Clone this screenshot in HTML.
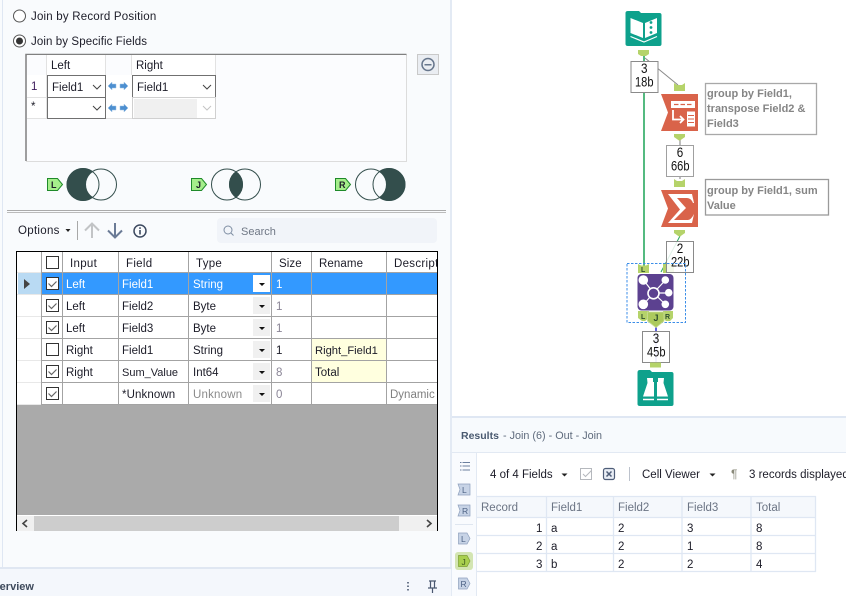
<!DOCTYPE html>
<html><head><meta charset="utf-8"><style>
html,body{margin:0;padding:0;background:#fff;width:846px;height:596px;overflow:hidden}
svg{display:block}
text{font-family:"Liberation Sans",sans-serif;font-size:11.5px;fill:#1c1c28}
.g{fill:#8a8596}.w{fill:#fff}.c{font-size:14px;fill:#111}
.a{font-weight:bold;fill:#858585;font-size:11px}
.h{fill:#6b7484}
.gl{stroke:#a3a3a3;stroke-width:1;fill:none}
.anc{fill:#b5d36a}
</style></head><body>
<svg width="846" height="596" viewBox="0 0 846 596" xmlns="http://www.w3.org/2000/svg">
<defs>
<clipPath id="gc"><rect x="17" y="252" width="420" height="160"/></clipPath>
<clipPath id="a2"><circle cx="245" cy="184.5" r="16"/></clipPath>
<clipPath id="ov"><rect x="0" y="569" width="450" height="27"/></clipPath>
</defs>
<rect width="846" height="596" fill="#fff"/>
<!-- left panel -->
<rect x="0" y="0" width="451" height="568" fill="#f9fbfd"/>
<rect x="2" y="0" width="1" height="568" fill="#dfe7f3"/>
<rect x="450" y="0" width="2" height="596" fill="#e3eaf4"/>
<circle cx="19.5" cy="16" r="6" fill="#fff" stroke="#555"/>
<text x="31" y="20" style="letter-spacing:.2px">Join by Record Position</text>
<circle cx="19.5" cy="41" r="6" fill="#fff" stroke="#555"/>
<circle cx="19.5" cy="41" r="3.5" fill="#333"/>
<text x="31" y="45" style="letter-spacing:.1px">Join by Specific Fields</text>
<!-- join box -->
<path d="M406.5 54.5V161.5H26" fill="none" stroke="#dcdcdc"/>
<path d="M26 161V54.5H406.500" fill="none" stroke="#808080" stroke-width="1.5"/>
<rect x="27" y="55" width="379" height="106" fill="#fbfcfe"/>
<rect x="47" y="55" width="59" height="20" fill="#fff"/>
<rect x="132" y="55" width="84" height="20" fill="#fff"/>
<rect x="27" y="75" width="189" height="44" fill="#fff"/>
<path d="M46.500 55V119M105.500 55V75M131.500 55V75M215.500 55V119M27 118.500H216M27 97.500H47" stroke="#e2e2e2" fill="none"/>
<text x="51" y="69">Left</text><text x="136" y="69">Right</text>
<text x="31" y="90" style="fill:#3c1a5a">1</text><text x="31" y="110">*</text>
<rect x="47.500" y="75.500" width="58" height="22" fill="#fff" stroke="#707070"/>
<rect x="47.500" y="97.500" width="58" height="21" fill="#fff" stroke="#707070"/>
<rect x="132.500" y="75.500" width="83" height="22" fill="#fff" stroke="#707070"/>
<rect x="132.500" y="97.500" width="83" height="21" fill="#fff" stroke="#d0d0d0"/>
<rect x="134" y="99" width="63" height="19" fill="#f0f0f0"/>
<text x="52" y="91">Field1</text><text x="137" y="91">Field1</text>
<path d="M93 85l4 4 4-4M93 106l4 4 4-4M203 85l4 4 4-4" fill="none" stroke="#444"/>
<path d="M203 106l4 4 4-4" fill="none" stroke="#c4c4c4"/>
<g fill="#4d8fd0" stroke="#9cc0e4" stroke-width=".5">
<path d="M108 86l4-4v2h4v4h-4v2zM128 86l-4-4v2h-4v4h4v2z"/>
<path d="M108 108l4-4v2h4v4h-4v2zM128 108l-4-4v2h-4v4h4v2z"/>
</g>
<rect x="417.500" y="54.500" width="21" height="20" fill="#eaedf2" stroke="#c9c9c9"/>
<circle cx="428" cy="64.500" r="6" fill="none" stroke="#67768c" stroke-width="1.500"/>
<rect x="424.500" y="64" width="7" height="1.500" fill="#67768c"/>
<!-- venn -->
<path d="M47.500 178.500H57.500L62.500 184.500L57.500 190.500H47.500Z" fill="#a5ee8b" stroke="#1f8a2a"/>
<text x="51" y="188" style="font-size:9px;font-weight:bold">L</text>
<path d="M191.500 178.500H201.500L206.500 184.500L201.500 190.500H191.500Z" fill="#a5ee8b" stroke="#1f8a2a"/>
<text x="196" y="188" style="font-size:9px;font-weight:bold">J</text>
<path d="M335.500 178.500H345.500L350.500 184.500L345.500 190.500H335.500Z" fill="#a5ee8b" stroke="#1f8a2a"/>
<text x="339" y="188" style="font-size:9px;font-weight:bold">R</text>
<circle cx="83" cy="184.500" r="16.500" fill="#334e4c"/>
<circle cx="101" cy="184.500" r="15.500" fill="#f9fbfd" stroke="#334e4c"/>
<circle cx="83" cy="184.500" r="16" fill="none" stroke="#334e4c"/>
<circle cx="227" cy="184.500" r="15.500" fill="none" stroke="#334e4c"/>
<circle cx="245" cy="184.500" r="15.500" fill="none" stroke="#334e4c"/>
<circle cx="227" cy="184.500" r="16" fill="#334e4c" clip-path="url(#a2)"/>
<circle cx="389" cy="184.500" r="16.500" fill="#334e4c"/>
<circle cx="371" cy="184.500" r="15.500" fill="#f9fbfd" stroke="#334e4c"/>
<circle cx="389" cy="184.500" r="16" fill="none" stroke="#334e4c"/>
<!-- divider -->
<rect x="7" y="210" width="439" height="1" fill="#aaa"/>
<rect x="7" y="212" width="439" height="1" fill="#bbb"/>
<!-- toolbar -->
<text x="18" y="234" style="letter-spacing:.3px">Options</text>
<path d="M65.500 229h5l-2.500 3z" fill="#222"/>
<rect x="77" y="221" width="1" height="19" fill="#a8a8a8"/>
<path d="M92 224v14M85 230.500l7-7 7 7" fill="none" stroke="#c2c4c6" stroke-width="2"/>
<path d="M115 223v14M108 230.500l7 7 7-7" fill="none" stroke="#6b7b96" stroke-width="2"/>
<circle cx="140" cy="231" r="6" fill="none" stroke="#3d4a60" stroke-width="1.500"/>
<rect x="139.200" y="230" width="1.600" height="4.500" fill="#3d4a60"/><rect x="139.200" y="227.300" width="1.600" height="1.600" fill="#3d4a60"/>
<rect x="217" y="218" width="220" height="25" rx="4" fill="#f1f4f9"/>
<circle cx="228" cy="230" r="4" fill="none" stroke="#7f8ea3"/><path d="M231 233l2.500 2.500" stroke="#7f8ea3"/>
<text x="241" y="235" style="fill:#6f7785;font-size:11px">Search</text>
<!-- grid -->
<rect x="17" y="252" width="420" height="153" fill="#fff"/>
<rect x="42" y="273" width="395" height="21" fill="#3399ff"/>
<rect x="18" y="273" width="23" height="21" fill="#b9daf3"/>
<path d="M24 279l6 5-6 5z" fill="#444"/>
<rect x="312" y="339" width="74" height="43" fill="#ffffdf"/>
<rect x="17" y="405" width="420" height="110" fill="#aaa"/>
<g class="gl">
<path d="M41.500 252V405M62.500 252V405M118.500 252V405M188.500 252V405M271.500 252V405M311.500 252V405M386.500 252V405"/>
<path d="M17 272.500H437M17 294.500H437M17 316.500H437M17 338.500H437M17 360.500H437M17 382.500H437M17 404.500H437"/>
</g>
<path d="M17 272.500H41M17 294.500H41M17 316.500H41M17 338.500H41M17 360.500H41M17 382.500H41M17 404.500H41" stroke="#e8e8e8"/>
<path d="M16.500 531V251.500H437.500V531" fill="none" stroke="#000"/>
<g fill="none" stroke="#555">
<rect x="46.500" y="256.500" width="12" height="12" stroke="#333"/>
<rect x="46.500" y="277.500" width="12" height="12" fill="#fff" stroke="#333"/>
<rect x="46.500" y="299.500" width="12" height="12" stroke="#333"/>
<rect x="46.500" y="321.500" width="12" height="12" stroke="#333"/>
<rect x="46.500" y="343.500" width="12" height="12" stroke="#333"/>
<rect x="46.500" y="365.500" width="12" height="12" stroke="#333"/>
<rect x="46.500" y="387.500" width="12" height="12" stroke="#333"/>
<path d="M48.500 283.500l3 3 5-5M48.500 305.500l3 3 5-5M48.500 327.500l3 3 5-5M48.500 371.500l3 3 5-5M48.500 393.500l3 3 5-5" stroke="#666" stroke-width="1.200"/>
</g>
<text x="70" y="267" style="letter-spacing:.3px">Input</text><text x="126" y="267" style="letter-spacing:.3px">Field</text><text x="196" y="267" style="letter-spacing:.3px">Type</text><text x="279" y="267" style="letter-spacing:.1px">Size</text><text x="319" y="267" style="letter-spacing:.1px">Rename</text>
<text x="394" y="267" clip-path="url(#gc)" style="letter-spacing:.3px">Description</text>
<text x="66" y="288" class="w">Left</text><text x="122" y="288" class="w">Field1</text><text x="193" y="288" class="w">String</text><text x="276" y="288" class="w">1</text>
<text x="66" y="310">Left</text><text x="122" y="310">Field2</text><text x="193" y="310">Byte</text><text x="276" y="310" class="g">1</text>
<text x="66" y="332">Left</text><text x="122" y="332">Field3</text><text x="193" y="332">Byte</text><text x="276" y="332" class="g">1</text>
<text x="66" y="354">Right</text><text x="122" y="354">Field1</text><text x="193" y="354">String</text><text x="276" y="354">1</text><text x="315" y="354" style="font-size:11.2px">Right_Field1</text>
<text x="66" y="376">Right</text><text x="122" y="376" style="font-size:11px">Sum_Value</text><text x="193" y="376">Int64</text><text x="276" y="376" class="g">8</text><text x="315" y="376">Total</text>
<text x="122" y="398" style="letter-spacing:.1px">*Unknown</text><text x="193" y="398" style="fill:#8a8a8a;letter-spacing:.2px">Unknown</text><text x="276" y="398" class="g">0</text><text x="390" y="398" style="fill:#808080">Dynamic</text>
<rect x="253" y="275" width="17" height="17" fill="#fff"/><rect x="253" y="297" width="17" height="17" fill="#f0f0f0"/><rect x="253" y="319" width="17" height="17" fill="#f0f0f0"/><rect x="253" y="341" width="17" height="17" fill="#f0f0f0"/><rect x="253" y="363" width="17" height="17" fill="#f0f0f0"/><rect x="253" y="385" width="17" height="17" fill="#f0f0f0"/>
<path d="M259 283h6l-3 3zM259 305h6l-3 3zM259 327h6l-3 3zM259 349h6l-3 3zM259 371h6l-3 3zM259 393h6l-3 3z" fill="#111"/>
<!-- scrollbar -->
<rect x="17" y="515" width="420" height="1" fill="#fff"/>
<rect x="17" y="516" width="420" height="15" fill="#f0f0f0"/>
<rect x="34" y="516" width="365" height="15" fill="#cdcdcd"/>
<path d="M27 520l-4 3.500 4 3.500M427 520l4 3.500-4 3.500" fill="none" stroke="#444" stroke-width="1.600"/>
<!-- overview -->
<rect x="0" y="567" width="452" height="2" fill="#e0e7f2"/>
<rect x="0" y="569" width="451" height="27" fill="#f4f7fc"/>
<text x="-15" y="590" clip-path="url(#ov)" style="font-weight:bold;fill:#3e4a5c;font-size:11px">Overview</text>
<path d="M408 582v1.500M408 585.500v1.500M408 589v1.500" stroke="#4a5870" stroke-width="1.600"/>
<path d="M429 581h7M430.500 581v7M434.500 581v7M428 588h9M432.500 588v5" stroke="#4a5870" fill="none" stroke-width="1.200"/>
<!-- canvas connectors -->
<path d="M644 56V272" stroke="#2aa860" stroke-width="1.600"/>
<path d="M645 58L678 85" stroke="#8a8a8a"/>
<path d="M680 140V179" stroke="#a8a8a8" stroke-width="1.500"/>
<path d="M680 236L661 272" stroke="#2aa860"/>
<path d="M656 327V367" stroke="#3b3bdc" stroke-width="1.600"/>
<!-- input tool -->
<path d="M628 11H639L641 13H659.500Q661.500 13 661.500 15V44Q661.500 46 659.500 46H628Q625.500 46 625.500 44V13Q625.500 11 628 11Z" fill="#0ea18c"/>
<path d="M630.500 18L643 23V38L630.500 33ZM645 23L657 18V33L645 38Z" fill="#fff"/>
<path d="M630.500 36.500L644 42L657 36.500" fill="none" stroke="#fff" stroke-width="1.200"/>
<circle cx="651" cy="22.500" r="1.400" fill="#0ea18c"/><circle cx="651" cy="27.500" r="1.400" fill="#0ea18c"/><circle cx="651" cy="32.500" r="1.400" fill="#0ea18c"/>
<path class="anc" d="M638 50H649V54L646 56H641L638 54Z"/>
<!-- box 1 -->
<rect x="631" y="61.500" width="27" height="31" fill="#fff" stroke="#8a8a8a"/>
<text class="c" x="641" y="73" textLength="6.500" lengthAdjust="spacingAndGlyphs">3</text><text class="c" x="635" y="86.500" textLength="18.500" lengthAdjust="spacingAndGlyphs">18b</text>
<!-- transpose -->
<path class="anc" d="M674 83L677 85H682L685 83V91H674Z"/>
<path d="M661 94H698V131H661L668 112.500Z" fill="#d9634a"/>
<rect x="671" y="101" width="24" height="7" fill="#fff"/>
<path d="M674 104.500h4.500M680.500 104.500h4.500M687 104.500h4.500" stroke="#d9634a" stroke-width="1.300"/>
<path d="M673 110V119.500H683M680 116l3.500 3.500-3.500 3.500" fill="none" stroke="#fff" stroke-width="1.800"/>
<rect x="687" y="111.500" width="8" height="15" fill="#fff"/>
<path d="M688 115.500h6M688 119h6M688 122.500h6" stroke="#d9634a"/>
<path class="anc" d="M674 134H685V137L680 140.500H679L674 137Z"/>
<!-- annot 1 -->
<rect x="705.500" y="83.500" width="111" height="51" fill="#fff" stroke="#a8a8a8" stroke-width="1.300"/>
<text class="a" x="707" y="97">group by Field1,</text><text class="a" x="707" y="112">transpose Field2 &amp;</text><text class="a" x="707" y="127">Field3</text>
<!-- box 2 -->
<rect x="666.500" y="145.500" width="27" height="31" fill="#fff" stroke="#a0a0a0"/>
<text class="c" x="676.800" y="157" textLength="6.500" lengthAdjust="spacingAndGlyphs">6</text><text class="c" x="671" y="170.500" textLength="18.500" lengthAdjust="spacingAndGlyphs">66b</text>
<path class="anc" d="M674 179L677 181H682L685 179V187H674Z"/>
<!-- sum -->
<path d="M661 190H698V227H661L668 208.500Z" fill="#d9634a"/>
<path d="M668 194H692L694 203H693Q691 198 687 198H677L686 208L674 220H688Q691 220 694 214L692 223H668L680 209.500Z" fill="#fff"/>
<path class="anc" d="M674 230H685V233L680 236.500H679L674 233Z"/>
<!-- annot 2 -->
<rect x="705.500" y="179.500" width="123" height="35.500" fill="#fff" stroke="#9a9a9a" stroke-width="1.300"/>
<text class="a" x="707" y="194">group by Field1, sum</text><text class="a" x="707" y="209">Value</text>
<!-- box 3 -->
<path class="anc" d="M663 264H674V273H663Z"/>
<rect x="666.500" y="241.500" width="27" height="31" fill="#fff" fill-opacity=".85" stroke="#8a8a8a"/>
<text class="c" x="676.800" y="253" textLength="6.500" lengthAdjust="spacingAndGlyphs">2</text><text class="c" x="671" y="266.500" textLength="18.500" lengthAdjust="spacingAndGlyphs">22b</text>
<!-- join -->
<path class="anc" d="M638 264L641 265.500H646L649 264V273H638Z"/>
<text x="641" y="272" style="font-size:7px;font-weight:bold;fill:#2f4f2f">L</text>
<rect x="627" y="263.500" width="58.500" height="59" fill="none" stroke="#3b8ee8" stroke-dasharray="2.500 1.500"/>
<rect x="637.500" y="274" width="36" height="36.500" rx="4" fill="#5c4190"/>
<g stroke="#fff" stroke-width="1.200"><path d="M653.500 293L643.500 280M653.500 293L665.500 280M653.500 293H668.500M653.500 293L665.500 304.500M653.500 293L643.500 304.500"/></g>
<circle cx="653.500" cy="293.300" r="5.500" fill="#5c4190" stroke="#fff" stroke-width="1.600"/>
<circle cx="643.300" cy="280" r="4.800" fill="#fff"/><circle cx="665.300" cy="280" r="3.800" fill="#fff"/><circle cx="668.700" cy="292.700" r="3.800" fill="#fff"/><circle cx="665.300" cy="304.300" r="3.800" fill="#fff"/><circle cx="643.300" cy="304.300" r="4.800" fill="#fff"/>
<path class="anc" d="M638 311H649V318L645 321H642L638 318ZM663 311H673V318L670 321H666L663 318Z"/>
<path d="M647.500 312H664V321L656 327.500L647.500 321Z" fill="#acca5e" stroke="#c9dd96" stroke-width=".8"/>
<text x="641" y="319" style="font-size:7px;font-weight:bold;fill:#2f4f2f">L</text>
<text x="665" y="319" style="font-size:7px;font-weight:bold;fill:#2f4f2f">R</text>
<text x="653.500" y="321" style="font-size:9px;font-weight:bold;fill:#2f4f2f">J</text>
<!-- box 4 -->
<rect x="642.500" y="331.500" width="27" height="31" fill="#fff" fill-opacity=".9" stroke="#8a8a8a"/>
<text class="c" x="652.800" y="343" textLength="6.500" lengthAdjust="spacingAndGlyphs">3</text><text class="c" x="647" y="356.500" textLength="18.500" lengthAdjust="spacingAndGlyphs">45b</text>
<rect x="650" y="362.500" width="11" height="5" class="anc"/>
<!-- browse -->
<path d="M640 370H650L652 372H671.500Q673.500 372 673.500 374V404Q673.500 406 671.500 406H640Q637.500 406 637.500 404V372.500Q637.500 370 640 370Z" fill="#0ea18c"/>
<path d="M647 378H653V382H654V396.500H643L647.500 383Z" fill="#fff"/>
<path d="M664 378H658V382H657V396.500H668L663.500 383Z" fill="#fff"/>
<path d="M643 399.500H654M657 399.500H668" stroke="#fff" stroke-width="1.500"/>
<!-- results -->
<rect x="452" y="416" width="394" height="2" fill="#dfe7f3"/>
<rect x="452" y="418" width="394" height="34" fill="#f7fafd"/>
<rect x="452" y="452" width="394" height="1" fill="#e2e9f3"/>
<text x="461" y="439" style="font-weight:bold;font-size:10.500px;fill:#4a5a70">Results</text>
<text x="503" y="439" style="fill:#5f6b7d;font-size:10.800px">- Join (6) - Out - Join</text>
<rect x="452" y="453" width="24" height="143" fill="#f9fbfe"/>
<rect x="476" y="453" width="1" height="143" fill="#e2e9f3"/>
<path d="M460 466h10M460 470h10M460 462.500h10" stroke="#6b7f9e" stroke-dasharray="1.500 1 8" fill="none" />
<path d="M458 484H470V495H458L460 489.500Z" fill="#c7d3e6" stroke="#8ea0bd" stroke-width=".7"/><text x="462" y="493" style="font-size:8.500px;fill:#4d6285">L</text>
<path d="M458 505H470V516H458L460 510.500Z" fill="#c7d3e6" stroke="#8ea0bd" stroke-width=".7"/><text x="462" y="514" style="font-size:8.500px;fill:#4d6285">R</text>
<rect x="455" y="524" width="18" height="1" fill="#dfe6f0"/>
<path d="M458.500 533H467L470 538.500L467 544H458.500Z" fill="#c7d3e6" stroke="#8ea0bd" stroke-width=".7"/><text x="461" y="542" style="font-size:8.500px;fill:#4d6285">L</text>
<rect x="455" y="552" width="18" height="18" rx="3" fill="#d3e5b2"/>
<path d="M458.500 555.500H467L470 561L467 566.500H458.500Z" fill="#a8cf4e" stroke="#7d9e33" stroke-width=".7"/><text x="461.500" y="565" style="font-size:8.500px;fill:#3f5a1f">J</text>
<path d="M458.500 578H467L470 583.500L467 589H458.500Z" fill="#c7d3e6" stroke="#8ea0bd" stroke-width=".7"/><text x="460.500" y="587" style="font-size:8.500px;fill:#4d6285">R</text>
<text x="490" y="478">4 of 4 Fields</text>
<path d="M561.500 473.500h6l-3 3z" fill="#222"/>
<rect x="580.500" y="468.500" width="11" height="11" fill="none" stroke="#b5b8bd"/><path d="M583 474l2.500 2.500 6-6" fill="none" stroke="#b5b8bd"/>
<rect x="603.500" y="468.500" width="11" height="11" rx="2" fill="#e8edf5" stroke="#4e5d78" stroke-width="1.200"/><path d="M606.500 471.500l5 5M611.500 471.500l-5 5" stroke="#4e5d78" stroke-width="1.500"/>
<rect x="629" y="467" width="1" height="14" fill="#bcc2cc"/>
<text x="642" y="478">Cell Viewer</text>
<path d="M709.500 473.500h6l-3 3z" fill="#222"/>
<text x="731" y="478" style="fill:#8a8a7a;font-size:12px">¶</text>
<text x="749" y="478">3 records displayed</text>
<!-- table -->
<rect x="477" y="496" width="339" height="21" fill="#f5f8fc"/>
<path d="M477 496.500H816M477 517.500H816M477 535.500H816M477 553.500H816M477 571.500H816" stroke="#dfe7f3" stroke-width="1.300"/>
<path d="M546.500 496V572M613.500 496V572M682 496V572M751 496V572M815.500 496V572" stroke="#dfe7f3" stroke-width="1.300"/>
<text x="481" y="511" style="fill:#6b7484">Record</text><text x="551" y="511" class="h">Field1</text><text x="618" y="511" class="h">Field2</text><text x="687" y="511" class="h">Field3</text><text x="756" y="511" class="h">Total</text>
<text x="536" y="532">1</text><text x="551" y="532">a</text><text x="618" y="532">2</text><text x="687" y="532">3</text><text x="756" y="532">8</text>
<text x="536" y="550">2</text><text x="551" y="550">a</text><text x="618" y="550">2</text><text x="687" y="550">1</text><text x="756" y="550">8</text>
<text x="536" y="568">3</text><text x="551" y="568">b</text><text x="618" y="568">2</text><text x="687" y="568">2</text><text x="756" y="568">4</text>
</svg>
</body></html>
